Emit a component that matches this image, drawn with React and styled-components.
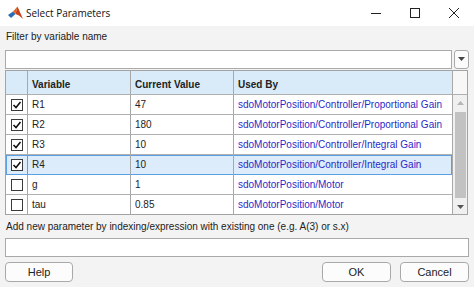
import React from 'react';
import styled, { createGlobalStyle } from 'styled-components';

const GlobalStyle = createGlobalStyle`
  html, body {
    margin: 0;
    padding: 0;
    background: #f3f3f3;
  }
  body {
    font-family: "Liberation Sans", Arial, sans-serif;
  }
`;

const Window = styled.div`
  width: 474px;
  height: 287px;
  display: flex;
  flex-direction: column;
  background: #f3f3f3;
  overflow: hidden;
`;

const TitleBar = styled.div`
  height: 26px;
  flex: 0 0 26px;
  background: #ffffff;
  display: flex;
  align-items: center;
  padding-left: 8px;
  box-sizing: border-box;
`;

const Title = styled.span`
  margin-left: 3px;
  flex: 1;
  font-family: "Open Sans", "Noto Sans", sans-serif;
  font-size: 10px;
  color: #111;
`;

const WinButtons = styled.div`
  display: flex;
  margin-right: 1px;
`;

const WinButton = styled.div`
  width: 39px;
  height: 26px;
  display: flex;
  align-items: center;
  justify-content: center;
`;

const Content = styled.div`
  flex: 1;
  display: flex;
  flex-direction: column;
  padding: 0 5px;
`;

const Label = styled.div`
  margin-top: ${p => p.$top}px;
  height: 14px;
  line-height: 14px;
  font-size: 10px;
  color: #222;
  padding-left: 1px;
`;

const FilterRow = styled.div`
  margin-top: 6px;
  display: flex;
  gap: 2px;
  height: 19px;
`;

const TextBox = styled.div`
  flex: ${p => (p.$fixed ? '0 0 19px' : '1')};
  height: 19px;
  margin-top: ${p => p.$top || 0}px;
  background: #ffffff;
  border: 1px solid #a9a9a9;
  box-sizing: border-box;
`;

const DropButton = styled.div`
  width: 15px;
  height: 19px;
  box-sizing: border-box;
  border: 1px solid #a9a9a9;
  border-radius: 3px;
  background: #fbfbfb;
  display: flex;
  align-items: center;
  justify-content: center;
`;

const TableFrame = styled.div`
  margin-top: 1px;
  width: 463px;
  height: 145px;
  box-sizing: border-box;
  border: 1px solid #a3a3a3;
  display: flex;
  overflow: hidden;
  background: #ffffff;
`;

const Grid = styled.div`
  flex: 1;
  display: flex;
  flex-direction: column;
`;

const Row = styled.div`
  display: grid;
  grid-template-columns: 22px 103px 103px 1fr;
  height: ${p => (p.$header ? 24 : 20)}px;
  flex: 0 0 auto;
  background: ${p => (p.$header ? '#d9ebf9' : p.$selected ? '#dcecfb' : '#ffffff')};
  box-shadow: ${p => (p.$selected ? 'inset 0 0 0 1px #5c9fe3' : 'none')};
`;

const Cell = styled.div`
  box-sizing: border-box;
  border-right: 1px solid ${p => (p.$focus ? '#5c9fe3' : '#a8a8a8')};
  border-bottom: 1px solid ${p => (p.$selected ? '#5c9fe3' : '#b0b0b0')};
  display: flex;
  align-items: center;
  padding: 0 4px;
  font-size: 10px;
  color: ${p => (p.$link ? '#2a2ac8' : '#222')};
  font-weight: ${p => (p.$head ? 'bold' : 'normal')};
  padding-top: ${p => (p.$head ? 3 : 0)}px;
  white-space: nowrap;
  overflow: hidden;
  &:last-child {
    border-right: ${p => (p.$selected ? '1px solid #5c9fe3' : 'none')};
  }
`;

const CheckCell = styled(Cell)`
  justify-content: center;
  padding: 0;
  border-left: ${p => (p.$focus ? '1px solid #5c9fe3' : 'none')};
`;

const Box = styled.span`
  width: 12px;
  height: 12px;
  box-sizing: border-box;
  border: 1px solid #3a3a3a;
  background: #ffffff;
  display: flex;
  align-items: center;
  justify-content: center;
`;

const ScrollCol = styled.div`
  width: 15px;
  flex: 0 0 15px;
  display: flex;
  flex-direction: column;
  border-left: 1px solid #a8a8a8;
  box-sizing: border-box;
`;

const ScrollCap = styled.div`
  height: 24px;
  flex: 0 0 24px;
  background: #f7f7f7;
  border-bottom: 1px solid #b0b0b0;
  box-sizing: border-box;
`;

const Track = styled.div`
  flex: 1;
  background: #f0f0f0;
  display: flex;
  flex-direction: column;
  align-items: center;
`;

const Arrow = styled.div`
  height: 15px;
  flex: 0 0 15px;
  display: flex;
  align-items: center;
  justify-content: center;
`;

const Thumb = styled.div`
  width: 11px;
  height: 86px;
  margin-top: 2px;
  background: #c2c2c2;
  flex: 0 0 86px;
`;

const Spacer = styled.div`
  flex: 1;
`;

const ButtonRow = styled.div`
  margin-top: 5px;
  display: flex;
  justify-content: space-between;
`;

const ButtonGroup = styled.div`
  display: flex;
  gap: 9px;
`;

const Button = styled.div`
  width: ${p => p.$w}px;
  height: 20px;
  box-sizing: border-box;
  border: 1px solid #a9a9a9;
  border-radius: 4px;
  background: #fcfcfc;
  display: flex;
  align-items: center;
  justify-content: center;
  font-size: 11px;
  color: #222;
`;

const params = [
  { name: 'R1', value: '47', used: 'sdoMotorPosition/Controller/Proportional Gain', checked: true },
  { name: 'R2', value: '180', used: 'sdoMotorPosition/Controller/Proportional Gain', checked: true },
  { name: 'R3', value: '10', used: 'sdoMotorPosition/Controller/Integral Gain', checked: true },
  { name: 'R4', value: '10', used: 'sdoMotorPosition/Controller/Integral Gain', checked: true, selected: true },
  { name: 'g', value: '1', used: 'sdoMotorPosition/Motor', checked: false },
  { name: 'tau', value: '0.85', used: 'sdoMotorPosition/Motor', checked: false },
];

function Logo() {
  return (
    <svg width="15" height="14" viewBox="0 0 15 14">
      <polygon points="0,9 5,5.5 7.5,8 3,12" fill="#2b6cb3" />
      <polygon points="5,5.5 9.5,0.5 7.5,8" fill="#e0661f" />
      <polygon points="9.5,0.5 15,13 11,9.5 7.5,8" fill="#c9401b" />
    </svg>
  );
}

function Check({ checked }) {
  return (
    <Box>
      {checked && (
        <svg width="10" height="10" viewBox="0 0 10 10">
          <path d="M1.5 5 L4 7.5 L8.5 2" stroke="#111" strokeWidth="1.6" fill="none" />
        </svg>
      )}
    </Box>
  );
}

function App() {
  return (
    <Window>
      <GlobalStyle />
      <TitleBar>
        <Logo />
        <Title>Select Parameters</Title>
        <WinButtons>
          <WinButton>
            <svg width="10" height="10" viewBox="0 0 10 10">
              <line x1="0" y1="5.5" x2="10" y2="5.5" stroke="#222" strokeWidth="1" />
            </svg>
          </WinButton>
          <WinButton>
            <svg width="10" height="10" viewBox="0 0 10 10">
              <rect x="0.5" y="0.5" width="9" height="9" stroke="#222" strokeWidth="1" fill="none" />
            </svg>
          </WinButton>
          <WinButton>
            <svg width="10" height="10" viewBox="0 0 10 10">
              <path d="M0 0 L10 10 M10 0 L0 10" stroke="#222" strokeWidth="1" />
            </svg>
          </WinButton>
        </WinButtons>
      </TitleBar>
      <Content>
        <Label $top={4}>Filter by variable name</Label>
        <FilterRow>
          <TextBox />
          <DropButton>
            <svg width="7" height="5" viewBox="0 0 7 5">
              <polygon points="0,0 7,0 3.5,4" fill="#444" />
            </svg>
          </DropButton>
        </FilterRow>
        <TableFrame>
          <Grid>
            <Row $header>
              <Cell $head />
              <Cell $head>Variable</Cell>
              <Cell $head>Current Value</Cell>
              <Cell $head>Used By</Cell>
            </Row>
            {params.map(p => (
              <Row key={p.name} $selected={p.selected}>
                <CheckCell $focus={p.selected} $selected={p.selected}>
                  <Check checked={p.checked} />
                </CheckCell>
                <Cell $selected={p.selected}>{p.name}</Cell>
                <Cell $selected={p.selected}>{p.value}</Cell>
                <Cell $link $selected={p.selected}>{p.used}</Cell>
              </Row>
            ))}
          </Grid>
          <ScrollCol>
            <ScrollCap />
            <Track>
              <Arrow>
                <svg width="7" height="4" viewBox="0 0 7 4">
                  <polygon points="0,4 7,4 3.5,0" fill="#b5b5b5" />
                </svg>
              </Arrow>
              <Thumb />
              <Spacer />
              <Arrow>
                <svg width="7" height="4" viewBox="0 0 7 4">
                  <polygon points="0,0 7,0 3.5,4" fill="#555" />
                </svg>
              </Arrow>
            </Track>
          </ScrollCol>
        </TableFrame>
        <Label $top={5}>Add new parameter by indexing/expression with existing one (e.g. A(3) or s.x)</Label>
        <TextBox $top={4} $fixed />
        <ButtonRow>
          <Button $w={68}>Help</Button>
          <ButtonGroup>
            <Button $w={69}>OK</Button>
            <Button $w={69}>Cancel</Button>
          </ButtonGroup>
        </ButtonRow>
      </Content>
    </Window>
  );
}

export default App;
